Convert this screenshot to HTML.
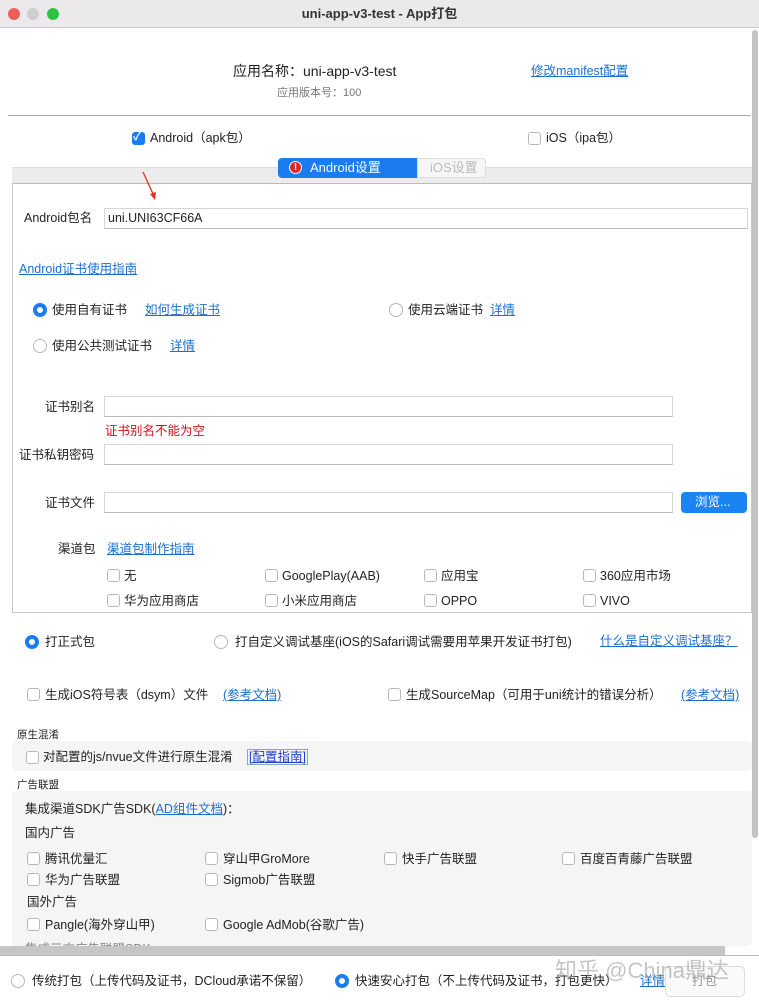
<!DOCTYPE html>
<html><head><meta charset="utf-8"><style>
*{margin:0;padding:0;box-sizing:border-box}
body{width:759px;height:1003px;position:relative;overflow:hidden;background:#fff;font-family:"Liberation Sans","Noto Sans CJK SC",sans-serif;color:#222}
.t{position:absolute;font-size:12.5px;line-height:16px;white-space:nowrap}
.a{color:#1a6fd0;text-decoration:underline}
.cb{position:absolute;width:13px;height:13px;border:1px solid #b8b8b8;border-radius:3px;background:#fff}
.rd{position:absolute;width:14px;height:14px;border:1px solid #b8b8b8;border-radius:50%;background:#fff}
.rd.on{border:4px solid #1a7cf0}
.in{position:absolute;height:21px;border:1px solid #d6d6d6;border-bottom-color:#bbb;background:#fff}
.dot{position:absolute;width:12px;height:12px;border-radius:50%;top:8px}
</style></head><body>
<div style="position:absolute;left:0;top:0;width:759px;height:28px;background:#ebe9ec;border-bottom:1px solid #c8c8c8"></div>
<div class="dot" style="left:8px;background:#ee5f58"></div>
<div class="dot" style="left:27px;background:#cfcdd0"></div>
<div class="dot" style="left:47px;background:#2ec243"></div>
<div class="t" style="left:0;width:759px;text-align:center;top:6px;font-weight:bold;font-size:13px;color:#333">uni-app-v3-test - App打包</div>
<div style="position:absolute;left:752px;top:30px;width:6px;height:808px;background:#c4c4c4;border-radius:3px"></div>

<div class="t" style="left:233px;top:63px;font-size:14px">应用名称：uni-app-v3-test</div>
<div class="t" style="left:277px;top:85px;font-size:11px;color:#777">应用版本号：100</div>
<div class="t a" style="left:531px;top:63px">修改manifest配置</div>
<div style="position:absolute;left:8px;top:115px;width:743px;height:1px;background:#aaa"></div>

<div class="cb" style="left:132px;top:132px;background:#1a7cf0;border-color:#1a7cf0"></div>
<div class="t" style="left:133px;top:129px;color:#fff;font-size:11px;font-weight:bold">✓</div>
<div class="t" style="left:150px;top:130px">Android（apk包）</div>
<div class="cb" style="left:528px;top:132px"></div>
<div class="t" style="left:546px;top:130px">iOS（ipa包）</div>

<div style="position:absolute;left:12px;top:167px;width:740px;height:16px;background:#ececec;border-top:1px solid #ddd"></div>
<div style="position:absolute;left:12px;top:183px;width:740px;height:430px;border:1px solid #c8c8c8;border-top-color:#bbb;background:#fff"></div>
<div style="position:absolute;left:278px;top:158px;width:139px;height:20px;background:#1a7cf0;border-radius:4px 0 0 4px"></div>
<div style="position:absolute;left:289px;top:161px;width:13px;height:13px;border-radius:50%;background:#e0262b;border:1px solid #fff;color:#fff;font-size:10px;line-height:11px;text-align:center;font-weight:bold">!</div>
<div class="t" style="left:310px;top:160px;color:#fff;font-size:13px">Android设置</div>
<div style="position:absolute;left:417px;top:158px;width:69px;height:20px;background:#f6f6f6;border:1px solid #ddd;border-radius:0 4px 4px 0"></div>
<div class="t" style="left:430px;top:160px;color:#bbb;font-size:13px">iOS设置</div>
<svg style="position:absolute;left:138px;top:170px" width="22" height="32"><line x1="5" y1="2" x2="16" y2="26" stroke="#e03020" stroke-width="1.3"/><path d="M12 24 L17 30 L18 22Z" fill="#e03020"/></svg>

<div class="t" style="left:24px;top:210px">Android包名</div>
<div class="in" style="left:104px;top:208px;width:644px"></div>
<div class="t" style="left:108px;top:210px">uni.UNI63CF66A</div>
<div class="t a" style="left:19px;top:261px">Android证书使用指南</div>

<div class="rd on" style="left:33px;top:303px"></div>
<div class="t" style="left:52px;top:302px">使用自有证书</div>
<div class="t a" style="left:145px;top:302px">如何生成证书</div>
<div class="rd" style="left:389px;top:303px"></div>
<div class="t" style="left:408px;top:302px">使用云端证书</div>
<div class="t a" style="left:490px;top:302px">详情</div>
<div class="rd" style="left:33px;top:339px"></div>
<div class="t" style="left:52px;top:338px">使用公共测试证书</div>
<div class="t a" style="left:170px;top:338px">详情</div>

<div class="t" style="left:45px;top:399px">证书别名</div>
<div class="in" style="left:104px;top:396px;width:569px"></div>
<div class="t" style="left:105px;top:423px;color:#d0121b">证书别名不能为空</div>
<div class="t" style="left:19px;top:447px">证书私钥密码</div>
<div class="in" style="left:104px;top:444px;width:569px"></div>
<div class="t" style="left:45px;top:495px">证书文件</div>
<div class="in" style="left:104px;top:492px;width:569px"></div>
<div style="position:absolute;left:681px;top:492px;width:66px;height:21px;background:#1a84f2;border-radius:4px"></div>
<div class="t" style="left:695px;top:494px;color:#fff">浏览...</div>

<div class="t" style="left:58px;top:541px">渠道包</div>
<div class="t a" style="left:107px;top:541px">渠道包制作指南</div>
<div class="cb" style="left:107px;top:569px"></div><div class="t" style="left:124px;top:568px">无</div>
<div class="cb" style="left:265px;top:569px"></div><div class="t" style="left:282px;top:568px">GooglePlay(AAB)</div>
<div class="cb" style="left:424px;top:569px"></div><div class="t" style="left:441px;top:568px">应用宝</div>
<div class="cb" style="left:583px;top:569px"></div><div class="t" style="left:600px;top:568px">360应用市场</div>
<div class="cb" style="left:107px;top:594px"></div><div class="t" style="left:124px;top:593px">华为应用商店</div>
<div class="cb" style="left:265px;top:594px"></div><div class="t" style="left:282px;top:593px">小米应用商店</div>
<div class="cb" style="left:424px;top:594px"></div><div class="t" style="left:441px;top:593px">OPPO</div>
<div class="cb" style="left:583px;top:594px"></div><div class="t" style="left:600px;top:593px">VIVO</div>

<div class="rd on" style="left:25px;top:635px"></div>
<div class="t" style="left:45px;top:634px">打正式包</div>
<div class="rd" style="left:214px;top:635px"></div>
<div class="t" style="left:235px;top:634px">打自定义调试基座(iOS的Safari调试需要用苹果开发证书打包)</div>
<div class="t a" style="left:600px;top:633px">什么是自定义调试基座？</div>

<div class="cb" style="left:27px;top:688px"></div>
<div class="t" style="left:45px;top:687px">生成iOS符号表（dsym）文件</div>
<div class="t a" style="left:223px;top:687px">(参考文档)</div>
<div class="cb" style="left:388px;top:688px"></div>
<div class="t" style="left:406px;top:687px">生成SourceMap（可用于uni统计的错误分析）</div>
<div class="t a" style="left:681px;top:687px">(参考文档)</div>

<div class="t" style="left:17px;top:727px;font-size:10.5px">原生混淆</div>
<div style="position:absolute;left:12px;top:741px;width:740px;height:30px;background:#f5f5f5;border-radius:4px"></div>
<div class="cb" style="left:26px;top:751px"></div>
<div class="t" style="left:43px;top:749px">对配置的js/nvue文件进行原生混淆</div>
<div class="t" style="left:247px;top:749px;color:#1a3fd0;text-decoration:underline;border:1px solid #8aa;padding:0 1px;line-height:14px">[配置指南]</div>

<div class="t" style="left:17px;top:777px;font-size:10.5px">广告联盟</div>
<div style="position:absolute;left:12px;top:791px;width:740px;height:155px;background:#f5f5f5;border-radius:4px"></div>
<div class="t" style="left:25px;top:801px">集成渠道SDK广告SDK(<span class="a">AD组件文档</span>)：</div>
<div class="t" style="left:25px;top:825px">国内广告</div>
<div class="cb" style="left:27px;top:852px"></div><div class="t" style="left:45px;top:851px">腾讯优量汇</div>
<div class="cb" style="left:205px;top:852px"></div><div class="t" style="left:223px;top:851px">穿山甲GroMore</div>
<div class="cb" style="left:384px;top:852px"></div><div class="t" style="left:402px;top:851px">快手广告联盟</div>
<div class="cb" style="left:562px;top:852px"></div><div class="t" style="left:580px;top:851px">百度百青藤广告联盟</div>
<div class="cb" style="left:27px;top:873px"></div><div class="t" style="left:45px;top:872px">华为广告联盟</div>
<div class="cb" style="left:205px;top:873px"></div><div class="t" style="left:223px;top:872px">Sigmob广告联盟</div>
<div class="t" style="left:27px;top:894px">国外广告</div>
<div class="cb" style="left:27px;top:918px"></div><div class="t" style="left:45px;top:917px">Pangle(海外穿山甲)</div>
<div class="cb" style="left:205px;top:918px"></div><div class="t" style="left:223px;top:917px">Google AdMob(谷歌广告)</div>
<div class="t" style="left:25px;top:941px;color:#888">集成三方广告联盟SDK</div>

<div style="position:absolute;left:0;top:946px;width:725px;height:9px;background:#c6c6c6"></div>
<div style="position:absolute;left:0;top:955px;width:759px;height:48px;background:#fff;border-top:1px solid #bbb"></div>
<div class="rd" style="left:11px;top:974px"></div>
<div class="t" style="left:32px;top:973px">传统打包（上传代码及证书，DCloud承诺不保留）</div>
<div class="rd on" style="left:335px;top:974px"></div>
<div class="t" style="left:355px;top:973px">快速安心打包（不上传代码及证书，打包更快）</div>
<div class="t a" style="left:640px;top:973px">详情</div>
<div style="position:absolute;left:665px;top:966px;width:80px;height:31px;border:1px solid #ddd;border-radius:5px;background:#fafafa"></div>
<div class="t" style="left:692px;top:973px;color:#999">打包</div>
<div class="t" style="left:555px;top:958px;font-size:22px;line-height:26px;color:rgba(150,150,150,0.55)">知乎 @China鼎达</div>
</body></html>
